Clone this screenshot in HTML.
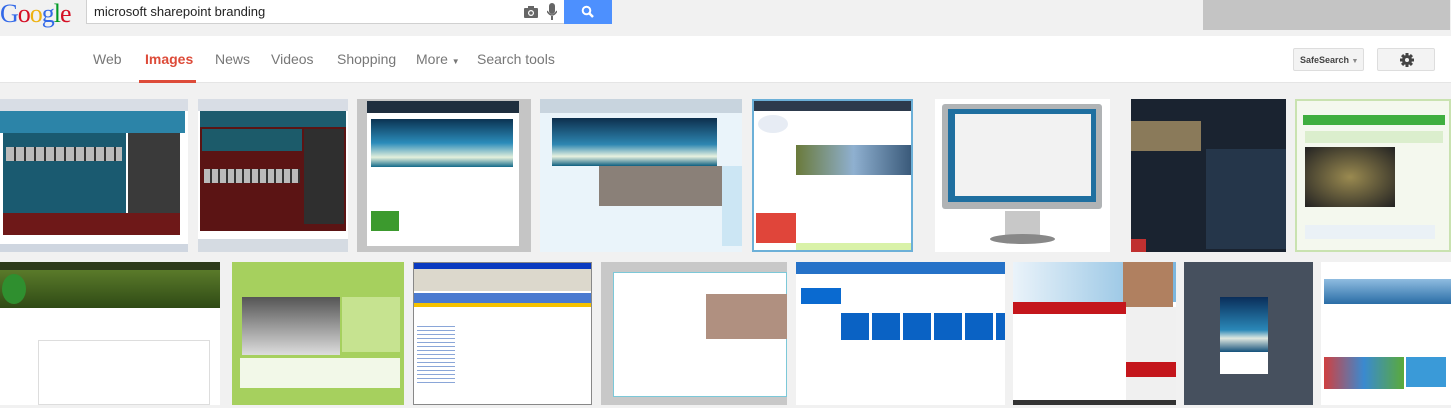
<!DOCTYPE html>
<html><head><meta charset="utf-8"><style>
*{margin:0;padding:0;box-sizing:border-box}
body{width:1451px;height:408px;overflow:hidden;background:#f1f1f1;font-family:Arial,"Liberation Sans",sans-serif;position:relative}
.top{position:absolute;left:0;top:0;width:1451px;height:36px;background:#f1f1f1}
.logo{position:absolute;left:0;top:-1px;font-family:"Liberation Serif",serif;font-size:26px;letter-spacing:-1px}
.sb{position:absolute;left:86px;top:0;width:480px;height:24px;background:#fff;border:1px solid #d0d0d0;border-top:none;font-size:13px;color:#222;padding:4px 7px}
.btn{position:absolute;left:564px;top:0;width:48px;height:24px;background:#4d90fe}
.gray{position:absolute;left:1203px;top:0;width:247px;height:30px;background:#c4c4c4}
.nav{position:absolute;left:0;top:36px;width:1451px;height:47px;background:#fff;border-bottom:1px solid #e5e5e5}
.nav span{position:absolute;top:15px;font-size:14px;color:#777;white-space:nowrap}
.ul{position:absolute;left:139px;top:80px;width:57px;height:3px;background:#dd4b39}
.ss{position:absolute;left:1293px;top:48px;width:71px;height:23px;border:1px solid #ddd;background:#f3f3f3;border-radius:2px;font-size:9px;font-weight:bold;color:#444;padding:6px 0 0 6px;white-space:nowrap}
.gear{position:absolute;left:1377px;top:48px;width:58px;height:23px;border:1px solid #ddd;background:#f3f3f3;border-radius:2px}
.t{position:absolute;overflow:hidden}
.t div{position:absolute}
</style></head><body>
<div class="top"></div>
<div class="logo"><span style="color:#3369e8">G</span><span style="color:#d50f25">o</span><span style="color:#eeb211">o</span><span style="color:#3369e8">g</span><span style="color:#009925">l</span><span style="color:#d50f25">e</span></div>
<div class="sb">microsoft sharepoint branding</div>
<svg style="position:absolute;left:524px;top:6px" width="14" height="12"><rect x="0" y="2" width="14" height="10" rx="1" fill="#666"/><rect x="4" y="0" width="6" height="3" fill="#666"/><circle cx="7" cy="7" r="3" fill="#fff"/><circle cx="7" cy="7" r="1.8" fill="#666"/></svg>
<svg style="position:absolute;left:547px;top:3px" width="10" height="18"><rect x="2" y="0" width="6" height="11" rx="3" fill="#666"/><path d="M0 8 Q5 16 10 8" stroke="#666" fill="none" stroke-width="1.5"/><rect x="4" y="13" width="2" height="4" fill="#666"/></svg>
<div class="btn"><svg style="position:absolute;left:17px;top:5px" width="14" height="14"><circle cx="5.5" cy="5.5" r="3.8" stroke="#fff" stroke-width="2" fill="none"/><path d="M8 8 L12 12" stroke="#fff" stroke-width="2.5"/></svg></div>
<div class="gray"></div>
<div class="nav">
<span style="left:93px">Web</span>
<span style="left:145px;color:#dd4b39;font-weight:bold">Images</span>
<span style="left:215px">News</span>
<span style="left:271px">Videos</span>
<span style="left:337px">Shopping</span>
<span style="left:416px">More <small style="font-size:8px">▼</small></span>
<span style="left:477px">Search tools</span>
</div>
<div class="ul"></div>
<div class="ss">SafeSearch <span style="color:#888;font-size:7px">▼</span></div>
<div class="gear"><svg style="position:absolute;left:22px;top:4px" width="14" height="14" viewBox="0 0 14 14"><g fill="#444"><circle cx="7" cy="7" r="5"/><rect x="5.5" y="0" width="3" height="14"/><rect x="0" y="5.5" width="14" height="3"/><rect x="5.5" y="0" width="3" height="14" transform="rotate(45 7 7)"/><rect x="5.5" y="0" width="3" height="14" transform="rotate(-45 7 7)"/></g><circle cx="7" cy="7" r="2" fill="#f3f3f3"/></svg></div>

<!-- row 1 -->
<div class="t" style="left:0;top:99px;width:188px;height:153px;background:#fff">
<div style="left:0;top:0;width:188px;height:12px;background:#d8dde5"></div>
<div style="left:0;top:12px;width:185px;height:22px;background:#2c84a8"></div>
<div style="left:3px;top:34px;width:123px;height:80px;background:#1a5a70"></div>
<div style="left:6px;top:48px;width:116px;height:14px;background:repeating-linear-gradient(90deg,#bbb 0 8px,#333 8px 10px)"></div>
<div style="left:128px;top:34px;width:52px;height:80px;background:#3a3a3a"></div>
<div style="left:3px;top:114px;width:177px;height:22px;background:#6e1818"></div>
<div style="left:0;top:145px;width:188px;height:8px;background:#cfd6e0"></div></div>
<div class="t" style="left:198px;top:99px;width:150px;height:153px;background:#fff">
<div style="left:0;top:0;width:150px;height:12px;background:#d8dde5"></div>
<div style="left:2px;top:12px;width:146px;height:120px;background:#5b1414"></div>
<div style="left:2px;top:12px;width:146px;height:16px;background:#1d5b6e"></div>
<div style="left:4px;top:30px;width:100px;height:22px;background:#1c5b6a"></div>
<div style="left:6px;top:70px;width:96px;height:14px;background:repeating-linear-gradient(90deg,#bbb 0 6px,#333 6px 8px)"></div>
<div style="left:106px;top:30px;width:40px;height:95px;background:#2f2f2f"></div>
<div style="left:0;top:140px;width:150px;height:13px;background:#d5dbe2"></div></div>
<div class="t" style="left:357px;top:99px;width:174px;height:153px;background:#c5c5c5">
<div style="left:10px;top:2px;width:152px;height:145px;background:#fff"></div>
<div style="left:10px;top:2px;width:152px;height:12px;background:#1e2e3e"></div>
<div style="left:14px;top:20px;width:142px;height:48px;background:linear-gradient(#0b3352,#2b8cba 50%,#e3f0dc 80%,#136a8a)"></div>
<div style="left:14px;top:112px;width:28px;height:20px;background:#3c9a2e"></div></div>
<div class="t" style="left:540px;top:99px;width:202px;height:153px;background:#eaf4fa">
<div style="left:0;top:0;width:202px;height:14px;background:#c8d4de"></div>
<div style="left:12px;top:19px;width:165px;height:48px;background:linear-gradient(#0d2f4d,#2d86b1 55%,#e8f2e0 80%,#0e5f80)"></div>
<div style="left:59px;top:67px;width:140px;height:40px;background:#8a8078"></div>
<div style="left:182px;top:67px;width:20px;height:80px;background:#cce6f4"></div></div>
<div class="t" style="left:752px;top:99px;width:161px;height:153px;background:#fff;border:2px solid #6cb0d8">
<div style="left:0;top:0;width:161px;height:10px;background:#2d3a4c"></div>
<div style="left:4px;top:14px;width:30px;height:18px;background:#e7ecf4;border-radius:50%"></div>
<div style="left:42px;top:44px;width:115px;height:30px;background:linear-gradient(90deg,#6a7a3a,#8fb0d0,#3a5a7a)"></div>
<div style="left:2px;top:112px;width:40px;height:30px;background:#e0453a"></div>
<div style="left:42px;top:142px;width:120px;height:8px;background:#d9f2a8"></div></div>
<div class="t" style="left:935px;top:99px;width:175px;height:153px;background:#fff">
<div style="left:7px;top:5px;width:160px;height:105px;background:#b0b3b5;border-radius:3px"></div>
<div style="left:13px;top:10px;width:148px;height:93px;background:#1f6fa0"></div>
<div style="left:20px;top:15px;width:136px;height:82px;background:#f2f2f2"></div>
<div style="left:70px;top:112px;width:35px;height:25px;background:#c8c8c8"></div>
<div style="left:55px;top:135px;width:65px;height:10px;background:#888;border-radius:50%"></div></div>
<div class="t" style="left:1131px;top:99px;width:155px;height:153px;background:#1a2330">
<div style="left:0;top:22px;width:70px;height:30px;background:#8a7a5a"></div>
<div style="left:0;top:140px;width:15px;height:13px;background:#c03030"></div>
<div style="left:75px;top:50px;width:80px;height:100px;background:#25364a"></div></div>
<div class="t" style="left:1295px;top:99px;width:156px;height:153px;background:#f4f8ee;border:2px solid #c9e2b0">
<div style="left:6px;top:14px;width:142px;height:10px;background:#3fae3f"></div>
<div style="left:8px;top:30px;width:138px;height:12px;background:#dbeecd"></div>
<div style="left:8px;top:46px;width:90px;height:60px;background:radial-gradient(#9a8a50,#222)"></div>
<div style="left:8px;top:124px;width:130px;height:14px;background:#eaf1f6"></div></div>

<!-- row 2 -->
<div class="t" style="left:0;top:262px;width:220px;height:143px;background:#fff">
<div style="left:0;top:0;width:220px;height:8px;background:#2d3a1a"></div>
<div style="left:0;top:8px;width:220px;height:38px;background:linear-gradient(#5a7a2a,#2f4a15)"></div>
<div style="left:2px;top:12px;width:24px;height:30px;background:#2f8f2f;border-radius:50%"></div>
<div style="left:38px;top:78px;width:172px;height:65px;border:1px solid #ddd"></div></div>
<div class="t" style="left:232px;top:262px;width:172px;height:143px;background:#a6d05e">
<div style="left:10px;top:35px;width:98px;height:58px;background:linear-gradient(#555,#ddd)"></div>
<div style="left:8px;top:96px;width:160px;height:30px;background:#f2f8e8"></div>
<div style="left:110px;top:35px;width:58px;height:55px;background:#c6e390"></div></div>
<div class="t" style="left:413px;top:262px;width:179px;height:143px;background:#fff;border:1px solid #888">
<div style="left:0;top:0;width:179px;height:6px;background:#0a3ac0"></div>
<div style="left:0;top:6px;width:179px;height:22px;background:#dcd8cc"></div>
<div style="left:0;top:30px;width:179px;height:10px;background:#4a7ad0"></div>
<div style="left:0;top:40px;width:179px;height:4px;background:#f6c200"></div>
<div style="left:3px;top:60px;width:38px;height:60px;background:repeating-linear-gradient(#fff 0 3px,#8aa6d8 3px 4px)"></div></div>
<div class="t" style="left:601px;top:262px;width:186px;height:143px;background:#c8c8c8">
<div style="left:12px;top:10px;width:174px;height:125px;background:#fff;border:1px solid #7cc8d8"></div>
<div style="left:105px;top:32px;width:81px;height:45px;background:#b09080"></div></div>
<div class="t" style="left:796px;top:262px;width:209px;height:143px;background:#fff">
<div style="left:0;top:0;width:209px;height:12px;background:#2572c8"></div>
<div style="left:5px;top:26px;width:40px;height:16px;background:#0a6ad0"></div>
<div style="left:45px;top:51px;width:164px;height:27px;background:repeating-linear-gradient(90deg,#0a62c4 0 28px,#fff 28px 31px)"></div></div>
<div class="t" style="left:1013px;top:262px;width:163px;height:143px;background:#fff">
<div style="left:0;top:0;width:163px;height:40px;background:linear-gradient(90deg,#eaf3fa,#7bb6dd)"></div>
<div style="left:110px;top:0;width:50px;height:45px;background:#b08060"></div>
<div style="left:0;top:40px;width:113px;height:12px;background:#c4161c"></div>
<div style="left:113px;top:45px;width:50px;height:98px;background:#f0f0f0"></div>
<div style="left:113px;top:100px;width:50px;height:15px;background:#c4161c"></div>
<div style="left:0;top:138px;width:163px;height:5px;background:#333"></div></div>
<div class="t" style="left:1184px;top:262px;width:129px;height:143px;background:#46505e">
<div style="left:36px;top:35px;width:48px;height:55px;background:linear-gradient(#0a2e5a,#2a88b8 60%,#dfe8e0 75%,#13507a)"></div>
<div style="left:36px;top:90px;width:48px;height:22px;background:#fff"></div></div>
<div class="t" style="left:1321px;top:262px;width:130px;height:143px;background:#fff">
<div style="left:3px;top:17px;width:127px;height:25px;background:linear-gradient(#8fbce0,#2a6da6)"></div>
<div style="left:3px;top:95px;width:80px;height:32px;background:linear-gradient(90deg,#d04040,#3a8ad0,#5aaa3a)"></div>
<div style="left:85px;top:95px;width:40px;height:30px;background:#3a9ad8"></div></div>
</body></html>
